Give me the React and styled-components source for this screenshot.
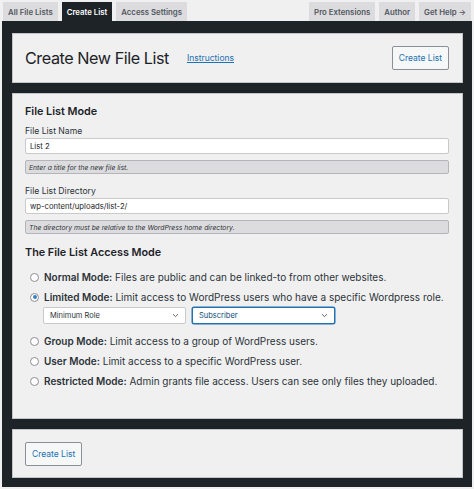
import styled, { createGlobalStyle } from "styled-components";

const GlobalStyle = createGlobalStyle`
  body {
    margin: 0;
    background: #f0f0f1;
    font-family: Inter, "Liberation Sans", sans-serif;
    color: #1d2327;
  }
`;

const Page = styled.div`
  width: 474px;
  height: 489px;
  padding-top: 2px;
  box-sizing: border-box;
`;

const TabBar = styled.div`
  display: flex;
  align-items: flex-end;
  padding: 0 3px;
  gap: 4px;
  height: 19px;
`;

const Tab = styled.div`
  height: 19px;
  padding: 0 5px;
  display: flex;
  align-items: center;
  font-size: 7.8px;
  font-weight: 600;
  background: ${(p) => (p.$active ? "#1d2327" : "#dcdcde")};
  color: ${(p) => (p.$active ? "#fff" : "#50575e")};
  margin-left: ${(p) => (p.$push ? "auto" : 0)};
`;

const Frame = styled.div`
  margin: 0 2px;
  background: #1d2327;
  padding: 12px 9px 9px 10px;
  display: flex;
  flex-direction: column;
  gap: 10px;
`;

const Card = styled.div`
  background: #f0f0f1;
  border: 1px solid #c3c4c7;
  box-sizing: border-box;
  padding: ${(p) => p.$pad || "12px"};
  height: ${(p) => p.$h}px;
`;

const HeaderCard = styled(Card)`
  display: flex;
  align-items: center;
`;

const PageTitle = styled.h1`
  margin: 0 18px 0 0;
  font-size: 16.2px;
  font-weight: 400;
  letter-spacing: -0.45px;
`;

const Link = styled.a`
  font-size: 8.5px;
  color: #2271b1;
  text-decoration: underline;
  cursor: pointer;
`;

const Button = styled.button`
  margin-left: ${(p) => (p.$right ? "auto" : 0)};
  height: 24px;
  padding: 0 6px;
  font-family: inherit;
  font-size: 8.5px;
  color: #2271b1;
  background: #f6f7f7;
  border: 1px solid #8c8f94;
  border-radius: 2px;
`;

const SectionTitle = styled.h2`
  margin: ${(p) => p.$m || "0"};
  font-size: 10.8px;
  font-weight: 600;
  line-height: 13px;
`;

const Field = styled.div`
  display: flex;
  flex-direction: column;
  margin-top: ${(p) => p.$top}px;
`;

const Label = styled.label`
  font-size: 8.6px;
  color: #2c3338;
  margin-bottom: 2px;
`;

const Input = styled.input`
  height: 16px;
  box-sizing: border-box;
  border: 1px solid #c8c9cc;
  border-radius: 2px;
  background: #fff;
  padding: 0 4px;
  font-family: inherit;
  font-size: 7.7px;
  color: #1d2327;
  outline: none;
`;

const Help = styled.div`
  margin-top: 6px;
  height: 14px;
  box-sizing: border-box;
  background: #dcdcde;
  border: 1px solid #b4b5b8;
  border-radius: 2px;
  padding: 0 3px;
  display: flex;
  align-items: center;
  font-size: 6.8px;
  font-style: italic;
  color: #2c3338;
`;

const ModeList = styled.div`
  display: flex;
  flex-direction: column;
  padding-left: 5px;
  margin-top: 8px;
`;

const ModeRow = styled.div`
  display: flex;
  align-items: center;
  height: 20px;
  font-size: 10px;
  color: #2c3338;
  white-space: nowrap;

  b {
    font-weight: 600;
  }
`;

const Radio = styled.span`
  width: 9px;
  height: 9px;
  flex-shrink: 0;
  box-sizing: border-box;
  border-radius: 50%;
  border: 1px solid #8c8f94;
  background: #fff;
  margin-right: 5px;
  display: flex;
  align-items: center;
  justify-content: center;

  &::after {
    content: "";
    width: 4px;
    height: 4px;
    border-radius: 50%;
    background: ${(p) => (p.$on ? "#3582c4" : "transparent")};
  }
`;

const SelectRow = styled.div`
  display: flex;
  gap: 6px;
  padding-left: 13px;
  margin-bottom: 7px;
`;

const Select = styled.div`
  width: 143px;
  height: 17px;
  box-sizing: border-box;
  border: 1px solid ${(p) => (p.$focus ? "#2271b1" : "#c8c9cc")};
  box-shadow: ${(p) => (p.$focus ? "0 0 0 0.5px #2271b1" : "none")};
  border-radius: 2px;
  background: #fff;
  display: flex;
  align-items: center;
  justify-content: space-between;
  padding: 0 6px;
  font-size: 7.5px;
  color: ${(p) => (p.$focus ? "#0a4b78" : "#2c3338")};
`;

const Chevron = () => (
  <svg width="7" height="5" viewBox="0 0 7 5">
    <path d="M1 1.2 L3.5 3.6 L6 1.2" fill="none" stroke="#50575e" strokeWidth="0.9" />
  </svg>
);

const modes = [
  ["Normal Mode:", "Files are public and can be linked-to from other websites."],
  ["Limited Mode:", "Limit access to WordPress users who have a specific Wordpress role.", true],
  ["Group Mode:", "Limit access to a group of WordPress users."],
  ["User Mode:", "Limit access to a specific WordPress user."],
  ["Restricted Mode:", "Admin grants file access. Users can see only files they uploaded."],
];

export default function App() {
  return (
    <Page>
      <GlobalStyle />
      <TabBar>
        <Tab>All File Lists</Tab>
        <Tab $active>Create List</Tab>
        <Tab>Access Settings</Tab>
        <Tab $push>Pro Extensions</Tab>
        <Tab>Author</Tab>
        <Tab>Get Help →</Tab>
      </TabBar>
      <Frame>
        <HeaderCard $h={50} $pad="0 13px 0 12px">
          <PageTitle>Create New File List</PageTitle>
          <Link>Instructions</Link>
          <Button $right>Create List</Button>
        </HeaderCard>

        <Card $h={326} $pad="11px 13px 0 12px">
          <SectionTitle>File List Mode</SectionTitle>
          <Field $top={8}>
            <Label>File List Name</Label>
            <Input defaultValue="List 2" />
            <Help>Enter a title for the new file list.</Help>
          </Field>
          <Field $top={12}>
            <Label>File List Directory</Label>
            <Input defaultValue="wp-content/uploads/list-2/" />
            <Help>The directory must be relative to the WordPress home directory.</Help>
          </Field>
          <SectionTitle $m="12px 0 0">The File List Access Mode</SectionTitle>
          <ModeList>
            {modes.map(([name, text, on]) => (
              <div key={name}>
                <ModeRow>
                  <Radio $on={on} />
                  <span>
                    <b>{name}</b> {text}
                  </span>
                </ModeRow>
                {on && (
                  <SelectRow>
                    <Select>
                      Minimum Role
                      <Chevron />
                    </Select>
                    <Select $focus>
                      Subscriber
                      <Chevron />
                    </Select>
                  </SelectRow>
                )}
              </div>
            ))}
          </ModeList>
        </Card>

        <Card $h={49} $pad="11px 12px">
          <Button>Create List</Button>
        </Card>
      </Frame>
    </Page>
  );
}
